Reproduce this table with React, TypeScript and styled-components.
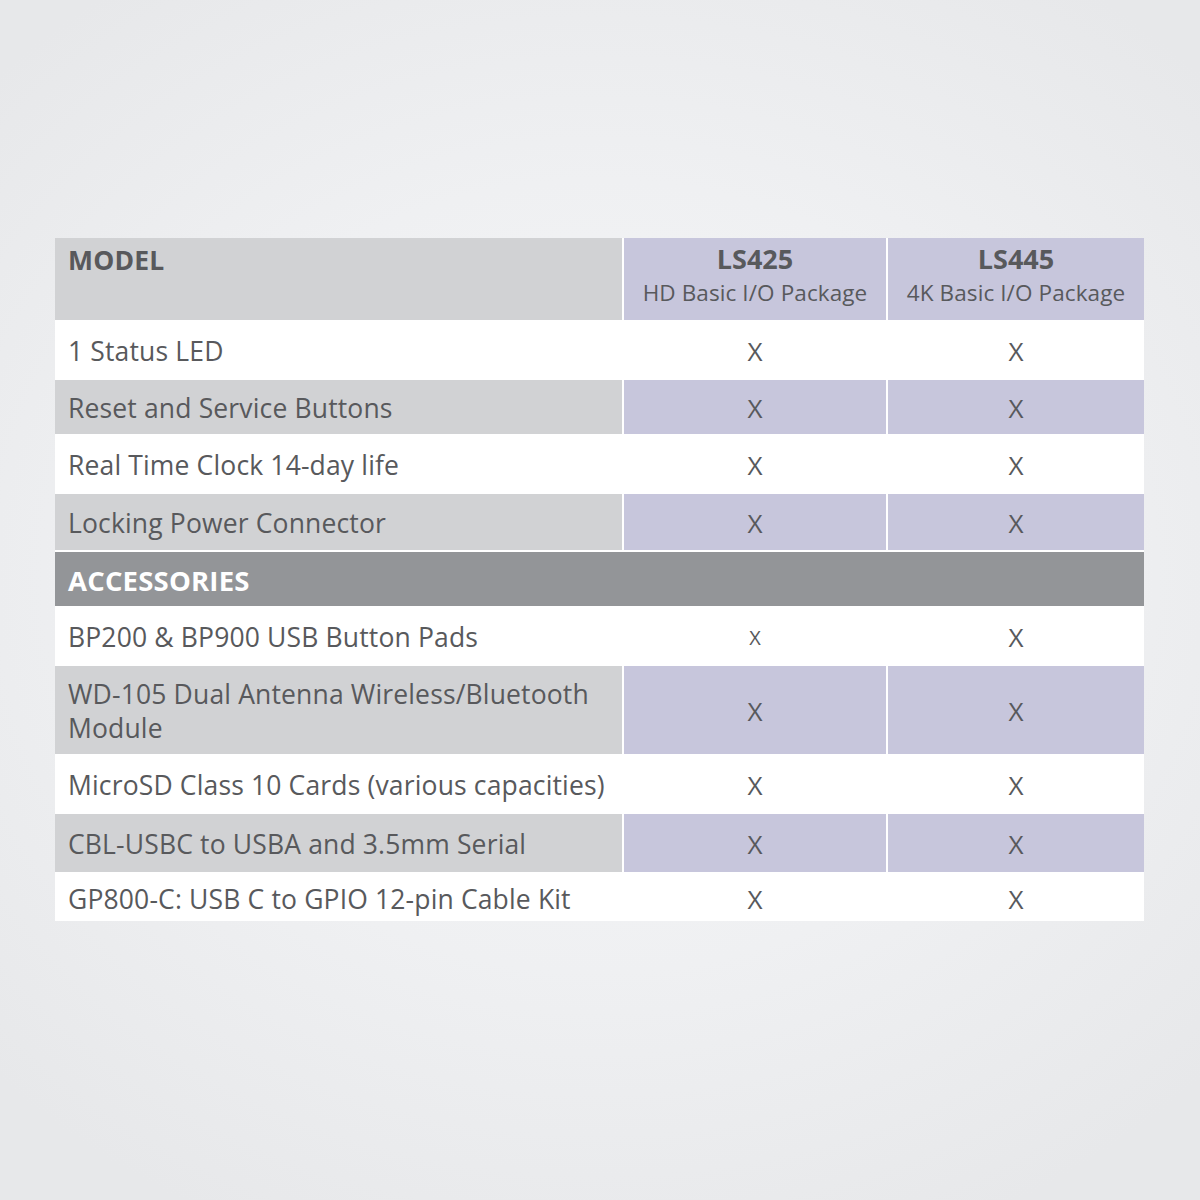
import React from "react";
import styled, { createGlobalStyle } from "styled-components";

const Global = createGlobalStyle`
  html, body { margin: 0; padding: 0; }
  body {
    width: 1200px;
    height: 1200px;
    background: radial-gradient(ellipse 70% 60% at 50% 48%, #f6f7f8 0%, #eff0f2 55%, #e7e8ea 100%);
    font-family: "Open Sans", "Lato", sans-serif;
    color: #58595c;
  }
`;

const Page = styled.div`
  width: 1200px;
  height: 1200px;
  padding: 238px 56px 0 55px;
  box-sizing: border-box;
`;

const Table = styled.div`
  width: 1089px;
  background: #ffffff;
  display: flex;
  flex-direction: column;
  gap: 2px;
`;

type Tone = "white" | "shade";

const Row = styled.div<{ $h: number }>`
  display: grid;
  grid-template-columns: 567px 262px 256px;
  column-gap: 2px;
  height: ${(p) => p.$h}px;
`;

const LabelCell = styled.div<{ $tone: Tone }>`
  background: ${(p) => (p.$tone === "shade" ? "#d1d2d4" : "#ffffff")};
  display: flex;
  align-items: center;
  padding: 2px 6px 0 13px;
  font-size: 26.5px;
  line-height: 34px;
  letter-spacing: 0.15px;
  white-space: nowrap;
`;

const MarkCell = styled.div<{ $tone: Tone; $small?: boolean }>`
  background: ${(p) => (p.$tone === "shade" ? "#c7c6dc" : "#ffffff")};
  display: flex;
  align-items: center;
  justify-content: center;
  font-size: ${(p) => (p.$small ? "20px" : "26px")};
  padding-top: 2px;
`;

const HeadLabel = styled.div`
  background: #d1d2d4;
  padding: 6px 13px 0;
  font-size: 26.5px;
  font-weight: 700;
  line-height: 32px;
  letter-spacing: 0.2px;
`;

const HeadModel = styled.div`
  background: #c7c6dc;
  display: flex;
  flex-direction: column;
  align-items: center;
  padding-top: 6px;
`;

const ModelName = styled.div`
  font-size: 27px;
  font-weight: 700;
  line-height: 30px;
`;

const ModelSub = styled.div`
  margin-top: 5px;
  font-size: 22.5px;
  line-height: 28px;
  letter-spacing: 0.1px;
`;

const SectionRow = styled.div`
  height: 54px;
  background: #939598;
  color: #ffffff;
  font-weight: 700;
  font-size: 27.5px;
  letter-spacing: 0.2px;
  display: flex;
  align-items: center;
  padding-left: 13px;
  padding-top: 2px;
  box-sizing: border-box;
`;

type Item = { label: React.ReactNode; h: number; small?: boolean };

const features: Item[] = [
  { label: "1 Status LED", h: 56 },
  { label: "Reset and Service Buttons", h: 54 },
  { label: "Real Time Clock 14-day life", h: 56 },
  { label: "Locking Power Connector", h: 56 },
];

const accessories: Item[] = [
  { label: "BP200 & BP900 USB Button Pads", h: 56, small: true },
  { label: <>WD-105 Dual Antenna Wireless/Bluetooth<br />Module</>, h: 88 },
  { label: "MicroSD Class 10 Cards (various capacities)", h: 56 },
  { label: "CBL-USBC to USBA and 3.5mm Serial", h: 58 },
  { label: "GP800-C: USB C to GPIO 12-pin Cable Kit", h: 47 },
];

function Rows({ items }: { items: Item[] }) {
  return (
    <>
      {items.map((it, i) => {
        const tone: Tone = i % 2 === 1 ? "shade" : "white";
        return (
          <Row key={i} $h={it.h}>
            <LabelCell $tone={tone}>{it.label}</LabelCell>
            <MarkCell $tone={tone} $small={it.small}>X</MarkCell>
            <MarkCell $tone={tone}>X</MarkCell>
          </Row>
        );
      })}
    </>
  );
}

export default function App() {
  return (
    <>
      <Global />
      <Page>
        <Table>
          <Row $h={82}>
            <HeadLabel>MODEL</HeadLabel>
            <HeadModel>
              <ModelName>LS425</ModelName>
              <ModelSub>HD Basic I/O Package</ModelSub>
            </HeadModel>
            <HeadModel>
              <ModelName>LS445</ModelName>
              <ModelSub>4K Basic I/O Package</ModelSub>
            </HeadModel>
          </Row>
          <Rows items={features} />
          <SectionRow>ACCESSORIES</SectionRow>
          <Rows items={accessories} />
        </Table>
      </Page>
    </>
  );
}
